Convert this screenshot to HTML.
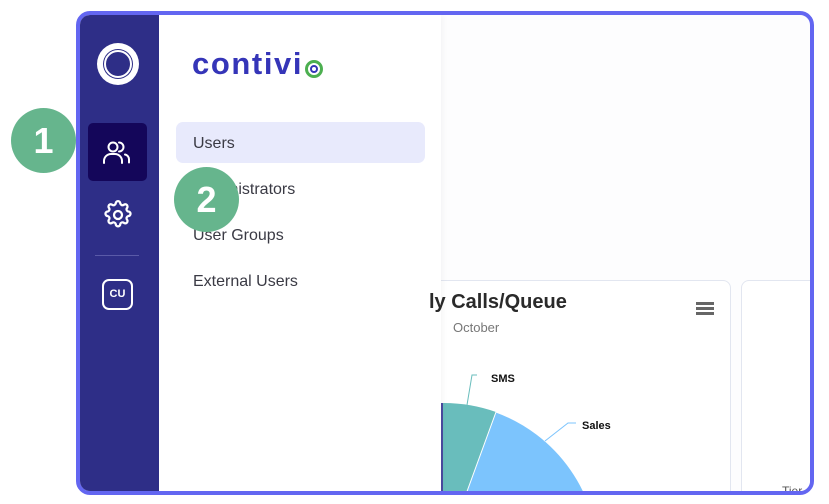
<!DOCTYPE html>
<html><head><style>
*{margin:0;padding:0;box-sizing:border-box}
html,body{width:829px;height:504px;overflow:hidden}
body{background:#fff;position:relative;font-family:"Liberation Sans",sans-serif}
.frame{position:absolute;left:76px;top:11px;width:738px;height:484px;border:4px solid #6366f1;border-radius:14px;overflow:hidden;background:#fdfdfe}
.side{position:absolute;left:0;top:0;width:79px;height:100%;background:#2e2e87}
.panel{position:absolute;left:79px;top:0;width:282px;height:100%;background:#fff;box-shadow:2px 0 6px rgba(0,0,0,0.04)}
.card{position:absolute;background:#fff;border:1px solid #e2e6f0;border-radius:8px}
.num{position:absolute;width:65px;height:65px;border-radius:50%;background:#66b58d;color:#fff;font-weight:bold;font-size:36px;text-align:center;line-height:65px}
.item{position:absolute;left:113px;font-size:16px;color:#3a3a44}
</style></head><body>
<div class="frame">
 <div class="card" style="left:330px;top:265px;width:321px;height:240px"></div>
 <div class="card" style="left:661px;top:265px;width:100px;height:240px"></div>
 <div style="position:absolute;left:616px;top:287px;width:18px;height:3px;background:#666;box-shadow:0 5px 0 #666,0 10px 0 #666"></div>
 <svg style="position:absolute;left:0;top:0" width="738" height="484">
  <path d="M362 545 L362 388 A157 157 0 0 1 416 397 Z" fill="#69bdbc"/>
  <path d="M362 545 L416 397 A157 157 0 0 1 519 545 Z" fill="#7cc4fd" stroke="#fff" stroke-width="1"/>
  <polyline points="387,390 392,360 397,360" fill="none" stroke="#69bdbc"/>
  <polyline points="465,426 488,408 496,408" fill="none" stroke="#7cc4fd"/>
  <line x1="362" y1="388" x2="362" y2="484" stroke="#4a4aa0" stroke-width="2"/>
  <text x="411" y="367" font-size="11" font-weight="bold" font-family="Liberation Sans" fill="#111">SMS</text>
  <text x="502" y="414" font-size="11" font-weight="bold" font-family="Liberation Sans" fill="#111">Sales</text>
  <text x="548" y="484" font-size="11" font-weight="bold" font-family="Liberation Sans" fill="#111">Tier 1 Support</text>
  <text x="702" y="480" font-size="12" font-family="Liberation Sans" fill="#555">Tier</text>
 </svg>
 <div class="side">
  <div style="position:absolute;left:17px;top:28px;width:42px;height:42px;border-radius:50%;background:#fff"></div>
  <div style="position:absolute;left:24px;top:35px;width:28px;height:28px;border-radius:50%;background:#2e2e87;border:2px solid #fff;box-shadow:0 0 0 1px #2e2e87"></div>
  <div style="position:absolute;left:8px;top:108px;width:59px;height:58px;border-radius:5px;background:#14065a"></div>
  <svg style="position:absolute;left:22px;top:123px" width="30" height="30" viewBox="0 0 30 30" fill="none" stroke="#fff" stroke-width="2" stroke-linecap="round"><circle cx="11" cy="9" r="4.5"/><path d="M2 25 v-2 a7 7 0 0 1 7-7 h4 a7 7 0 0 1 7 7 v2"/><path d="M17 4.5 a4.5 4.5 0 0 1 0 9"/><path d="M23 16.5 a5 5 0 0 1 4 5 v3"/></svg>
  <svg style="position:absolute;left:22px;top:184px" width="32" height="32" viewBox="0 0 24 24" fill="none" stroke="#fff" stroke-width="1.7" stroke-linejoin="round"><path d="M10.3 3.3a1.7 1.7 0 0 1 3.4 0 1.7 1.7 0 0 0 2.6 1.1 1.7 1.7 0 0 1 2.4 2.4 1.7 1.7 0 0 0 1 2.6 1.7 1.7 0 0 1 0 3.4 1.7 1.7 0 0 0-1 2.6 1.7 1.7 0 0 1-2.4 2.4 1.7 1.7 0 0 0-2.6 1 1.7 1.7 0 0 1-3.4 0 1.7 1.7 0 0 0-2.6-1 1.7 1.7 0 0 1-2.4-2.4 1.7 1.7 0 0 0-1-2.6 1.7 1.7 0 0 1 0-3.4 1.7 1.7 0 0 0 1-2.6 1.7 1.7 0 0 1 2.4-2.4 1.7 1.7 0 0 0 2.6-1.1z"/><circle cx="12" cy="12" r="3"/></svg>
  <div style="position:absolute;left:15px;top:240px;width:44px;height:1px;background:#5a5aa8"></div>
  <div style="position:absolute;left:22px;top:264px;width:31px;height:31px;border:2px solid #fff;border-radius:7px;color:#fff;font-size:11px;font-weight:bold;text-align:center;line-height:27px">CU</div>
 </div>
 <div class="panel">
  <div style="position:absolute;left:33px;top:31px;font-size:31px;font-weight:bold;color:#3535b8;letter-spacing:1.6px;line-height:36px">contivi</div>
  <div style="position:absolute;left:146px;top:45px;width:18px;height:18px;border-radius:50%;border:3px solid #4caf50;background:#fff"><div style="position:absolute;left:2px;top:2px;width:8px;height:8px;border-radius:50%;border:2px solid #3535b8"></div></div>
  <div style="position:absolute;left:17px;top:107px;width:249px;height:41px;border-radius:7px;background:#e8eafc"></div>
 </div>
 <div style="position:absolute;left:349px;top:276px;font-size:20px;font-weight:bold;color:#2a2a2a;z-index:2">ly Calls/Queue</div>
 <div style="position:absolute;left:373px;top:305px;font-size:13px;color:#777">October</div>
 <div class="item" style="top:120px">Users</div>
 <div class="item" style="top:166px">Administrators</div>
 <div class="item" style="top:212px">User Groups</div>
 <div class="item" style="top:258px">External Users</div>
</div>
<div class="num" style="left:11px;top:108px">1</div>
<div class="num" style="left:174px;top:167px">2</div>
</body></html>
